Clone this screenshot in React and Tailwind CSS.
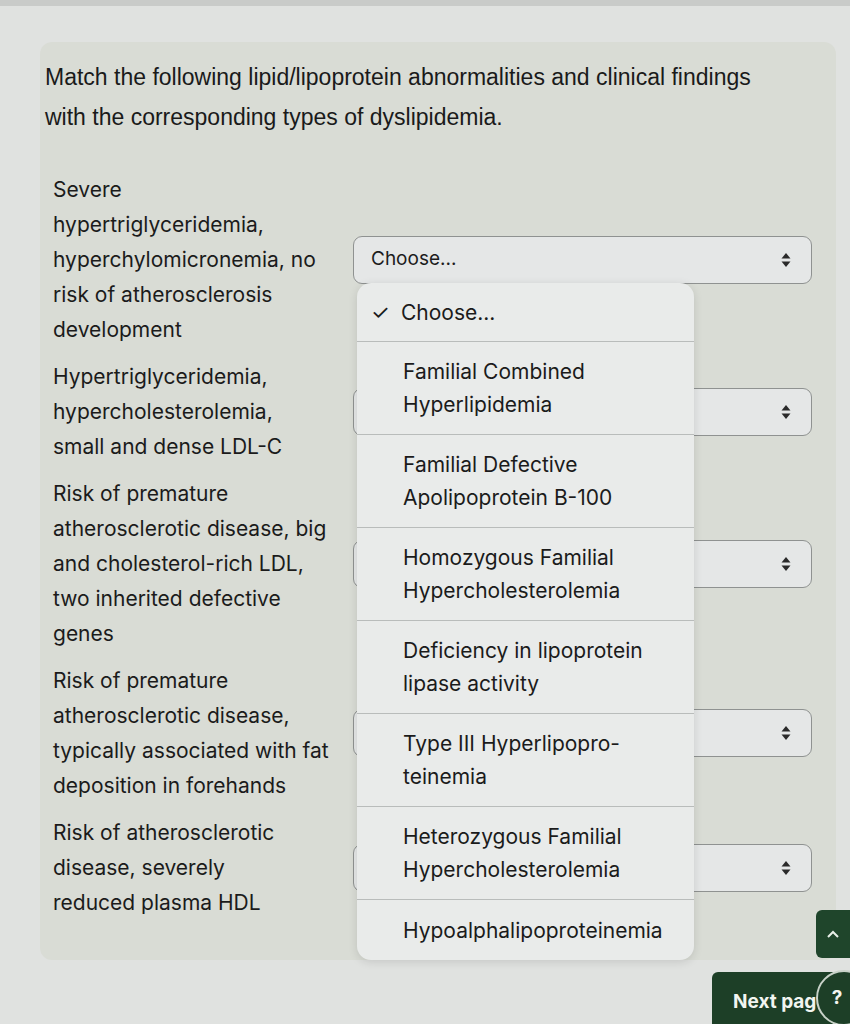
import React from "react";

// Findings listed on the left, each paired with a select on the right.
const FINDINGS = [
  ["Severe", "hypertriglyceridemia,", "hyperchylomicronemia, no", "risk of atherosclerosis", "development"],
  ["Hypertriglyceridemia,", "hypercholesterolemia,", "small and dense LDL-C"],
  ["Risk of premature", "atherosclerotic disease, big", "and cholesterol-rich LDL,", "two inherited defective", "genes"],
  ["Risk of premature", "atherosclerotic disease,", "typically associated with fat", "deposition in forehands"],
  ["Risk of atherosclerotic", "disease, severely", "reduced plasma HDL"],
];

const OPTIONS = [
  ["Familial Combined", "Hyperlipidemia"],
  ["Familial Defective", "Apolipoprotein B-100"],
  ["Homozygous Familial", "Hypercholesterolemia"],
  ["Deficiency in lipoprotein", "lipase activity"],
  ["Type III Hyperlipopro-", "teinemia"],
  ["Heterozygous Familial", "Hypercholesterolemia"],
  ["Hypoalphalipoproteinemia"],
];

const UpDown = () => (
  <svg width="10" height="16" viewBox="0 0 10 16" className="text-[#2a2a2a]">
    <path d="M5 1 L9.5 6.5 H0.5 Z" fill="currentColor" />
    <path d="M5 15 L9.5 9.5 H0.5 Z" fill="currentColor" />
  </svg>
);

const SelectBox = () => (
  <div className="flex h-[48px] flex-1 items-center justify-between rounded-[9px] border border-[#8f9291] bg-[#e5e7e7] pl-[17px] pr-[20px] text-[19px] text-[#1c1c1c]">
    <span>Choose...</span>
    <UpDown />
  </div>
);

const App = () => {
  return (
    <div
      className="relative min-h-[1024px] overflow-hidden bg-[#e0e2e0] text-[#1b1b1b]"
      style={{ fontFamily: "Inter, 'Liberation Sans', sans-serif" }}
    >
      <div className="h-[6px] bg-[#c9cbc9]" />

      {/* question card */}
      <div className="ml-[40px] mt-[36px] w-[796px] rounded-[12px] bg-[#d9dcd5] pb-[40px] pl-[5px] pr-[24px] pt-[15px]">
        <p
          className="text-[23px] leading-[40px] text-[#1a1a1a]"
          style={{ fontFamily: "'Liberation Sans', Arial, sans-serif" }}
        >
          Match the following lipid/lipoprotein abnormalities and clinical findings
          <br />
          with the corresponding types of dyslipidemia.
        </p>

        <div className="mt-[35px] flex flex-col gap-[12px] pl-[8px]">
          {FINDINGS.map((lines, i) => (
            <div key={i} className="flex items-center gap-[4px]">
              <div className="w-[296px] text-[21px] leading-[35px]">
                {lines.map((l, j) => (
                  <div key={j}>{l}</div>
                ))}
              </div>
              <SelectBox />
            </div>
          ))}
        </div>
      </div>

      {/* open options list */}
      <div className="absolute left-[357px] top-[283px] w-[337px] overflow-hidden rounded-[14px] bg-[#e9ebea] text-[21px] leading-[33px] shadow-[0_2px_10px_rgba(0,0,0,0.12)]">
        <div className="flex h-[59px] items-center gap-[8px] border-b border-[#b9bcbb] pl-[14px]">
          <span className="w-[22px] text-[21px]">✓</span>
          <span>Choose...</span>
        </div>
        {OPTIONS.map((opt, i) => (
          <div
            key={i}
            className={`flex flex-col justify-center pl-[46px] ${
              opt.length > 1 ? "h-[93px]" : "h-[60px]"
            } ${i < OPTIONS.length - 1 ? "border-b border-[#b9bcbb]" : ""}`}
          >
            {opt.map((l, j) => (
              <div key={j}>{l}</div>
            ))}
          </div>
        ))}
      </div>

      {/* back to top */}
      <div className="absolute left-[816px] top-[910px] flex h-[48px] w-[44px] items-center justify-center rounded-l-[6px] bg-[#1f452b] pr-[10px]">
        <svg width="14" height="10" viewBox="0 0 14 10">
          <path d="M2 8 L7 3 L12 8" stroke="#e8efe8" strokeWidth="2" fill="none" />
        </svg>
      </div>

      {/* next page */}
      <div className="absolute left-[712px] top-[972px] flex h-[60px] w-[150px] items-center rounded-l-[6px] bg-[#1d3f27] pl-[21px] text-[19px] font-bold text-[#f2f5f0]">
        Next pag
      </div>
      <div className="absolute left-[816px] top-[970px] flex h-[56px] w-[56px] items-center justify-center rounded-full border-2 border-[#c8d2c8] bg-[#1d3f27] pr-[14px] text-[19px] font-bold text-[#f2f5f0]">
        ?
      </div>
    </div>
  );
};

export default App;
